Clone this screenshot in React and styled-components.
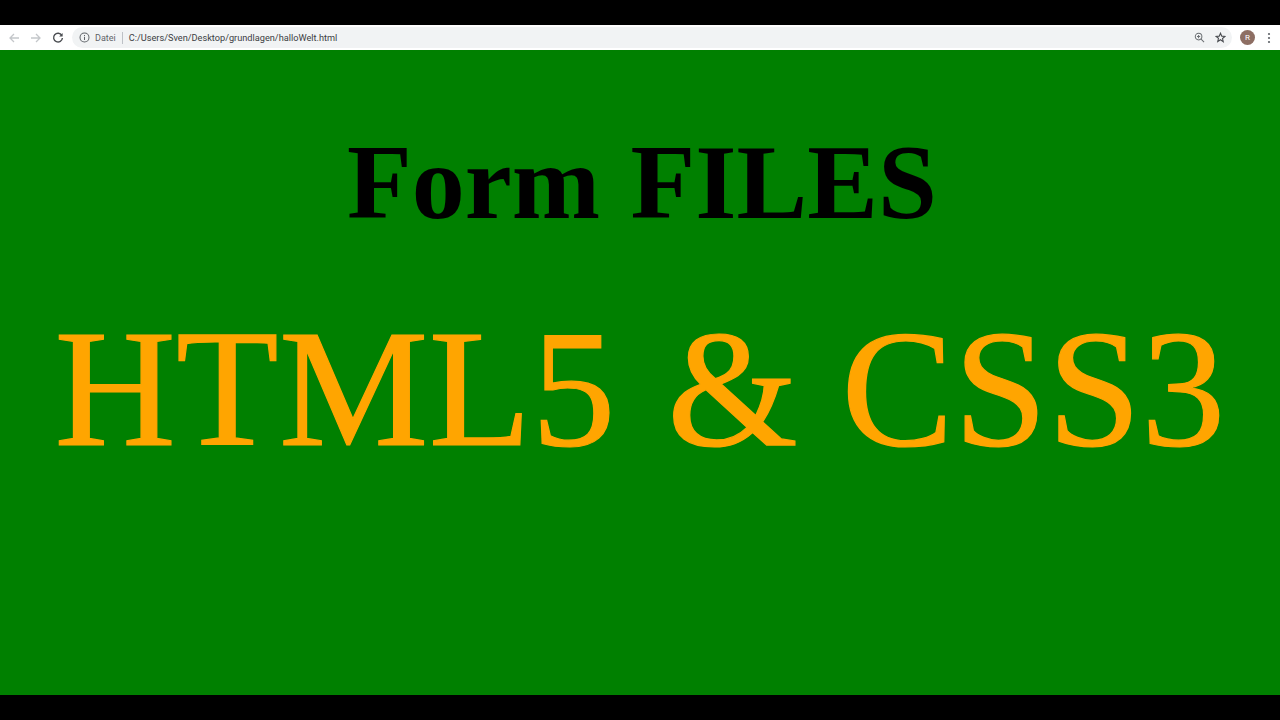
import styled, { createGlobalStyle } from "styled-components";

const GlobalStyle = createGlobalStyle`
  html, body {
    margin: 0;
    padding: 0;
    background: #000;
  }
`;

const Frame = styled.div`
  width: 1280px;
  height: 720px;
  display: flex;
  flex-direction: column;
  overflow: hidden;
  background: #000;
`;

const Letterbox = styled.div`
  height: 25px;
  flex: none;
  background: #000;
`;

const Toolbar = styled.div`
  height: 25px;
  flex: none;
  display: flex;
  align-items: center;
  background: #fff;
  font-family: "Roboto", "Liberation Sans", sans-serif;
`;

const NavButton = styled.div`
  width: 22px;
  height: 22px;
  display: flex;
  align-items: center;
  justify-content: center;
  flex: none;
`;

const NavGroup = styled.div`
  display: flex;
  align-items: center;
  padding-left: 3px;
  margin-right: 3px;
`;

const Omnibox = styled.div`
  flex: 1;
  height: 21px;
  display: flex;
  align-items: center;
  background: #f1f3f4;
  border-radius: 11px;
  padding: 0 6px 0 7px;
`;

const InfoIcon = styled.svg`
  flex: none;
`;

const Scheme = styled.span`
  font-size: 9px;
  color: #5f6368;
  margin-left: 5px;
`;

const Divider = styled.span`
  width: 1px;
  height: 12px;
  background: #bdc1c6;
  margin: 0 6px;
`;

const Url = styled.span`
  font-size: 9.2px;
  color: #3c4043;
  flex: 1;
`;

const OmniIcon = styled.div`
  width: 12px;
  height: 12px;
  display: flex;
  align-items: center;
  justify-content: center;
  margin-left: 9px;
`;

const Avatar = styled.div`
  width: 15px;
  height: 15px;
  border-radius: 50%;
  background: #8d6e63;
  color: #fff;
  font-size: 8px;
  display: flex;
  align-items: center;
  justify-content: center;
  margin-left: 8px;
  flex: none;
`;

const MenuDots = styled.div`
  width: 22px;
  display: flex;
  justify-content: center;
  margin-left: 3px;
  flex: none;
`;

const Page = styled.main`
  flex: 1;
  background: #008000;
  display: flex;
  flex-direction: column;
  align-items: center;
  font-family: "Liberation Serif", "Times New Roman", serif;
`;

const Heading = styled.h1`
  margin: 72px 0 0;
  padding-left: 4px;
  font-size: 106px;
  line-height: 122px;
  font-weight: 700;
  word-spacing: 4px;
  color: #000;
  white-space: nowrap;
`;

const Subject = styled.h2`
  margin: 48px 0 0;
  font-size: 168px;
  line-height: 193px;
  font-weight: 400;
  letter-spacing: 0.3px;
  word-spacing: 4px;
  color: #ffa500;
  -webkit-text-stroke: 1.2px #ffa500;
  white-space: nowrap;
`;

const Amp = styled.span`
  margin: 0 -3px 0 5px;
`;

function Arrow({ dir, color }) {
  const d = dir === "left" ? "M11 6H2M6 2L2 6l4 4" : "M1 6h9M6 2l4 4-4 4";
  return (
    <svg width="12" height="12" viewBox="0 0 12 12" fill="none" stroke={color} strokeWidth="1.3">
      <path d={d} />
    </svg>
  );
}

function Reload() {
  return (
    <svg width="12" height="12" viewBox="0 0 12 12" fill="none" stroke="#4a4d51" strokeWidth="1.4">
      <path d="M9.800 3.400A4.400 4.400 0 1 0 10.400 6" />
      <path d="M10.600 1v3.400H7.200z" fill="#4a4d51" stroke="none" />
    </svg>
  );
}

function Info() {
  return (
    <InfoIcon width="11" height="11" viewBox="0 0 12 12" fill="none" stroke="#5f6368" strokeWidth="1.1">
      <circle cx="6" cy="6" r="4.900" />
      <path d="M6 5.200v3.400M6 3.200v1.100" />
    </InfoIcon>
  );
}

function Zoom() {
  return (
    <svg width="11" height="11" viewBox="0 0 12 12" fill="none" stroke="#6b6f73" strokeWidth="1.1">
      <circle cx="5" cy="5" r="3.600" />
      <path d="M7.700 7.700L11 11M3.300 5h3.400M5 3.300v3.400" />
    </svg>
  );
}

function Star() {
  return (
    <svg width="11" height="11" viewBox="0 0 12 12" fill="none" stroke="#4a4d51" strokeWidth="1.200">
      <path d="M6 1.300l1.400 3.200 3.500.3-2.700 2.300.8 3.400L6 8.400 3 10.300l.8-3.400L1.100 4.800l3.500-.3z" />
    </svg>
  );
}

function Dots() {
  return (
    <svg width="4" height="12" viewBox="0 0 4 12" fill="#5f6368">
      <circle cx="2" cy="2" r="1.100" />
      <circle cx="2" cy="6" r="1.100" />
      <circle cx="2" cy="10" r="1.100" />
    </svg>
  );
}

export default function App() {
  return (
    <>
      <GlobalStyle />
      <Frame>
        <Letterbox />
        <Toolbar>
          <NavGroup>
            <NavButton><Arrow dir="left" color="#c4c7ca" /></NavButton>
            <NavButton><Arrow dir="right" color="#c4c7ca" /></NavButton>
            <NavButton><Reload /></NavButton>
          </NavGroup>
          <Omnibox>
            <Info />
            <Scheme>Datei</Scheme>
            <Divider />
            <Url>C:/Users/Sven/Desktop/grundlagen/halloWelt.html</Url>
            <OmniIcon><Zoom /></OmniIcon>
            <OmniIcon><Star /></OmniIcon>
          </Omnibox>
          <Avatar>R</Avatar>
          <MenuDots><Dots /></MenuDots>
        </Toolbar>
        <Page>
          <Heading>Form FILES</Heading>
          <Subject>HTML5 <Amp>&amp;</Amp> CSS3</Subject>
        </Page>
        <Letterbox />
      </Frame>
    </>
  );
}
